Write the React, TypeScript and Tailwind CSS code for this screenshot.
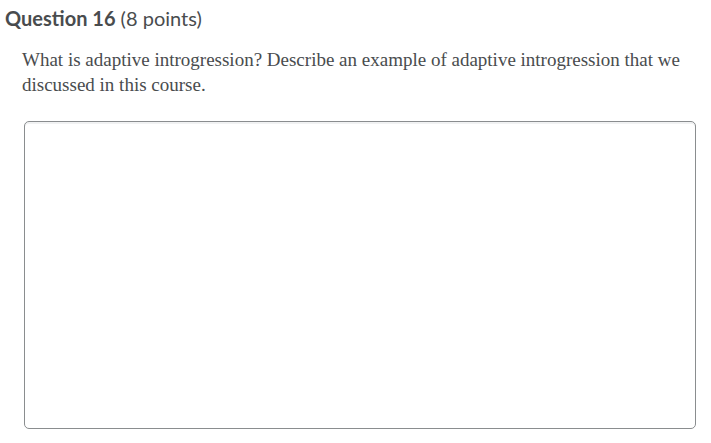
import React from "react"

const App: React.FC = () => {
  return (
    <div className="w-[711px] h-[443px] bg-white overflow-hidden">
      <div className="pl-[5px] pt-[6px]">
        <h2 className="font-['Lato',sans-serif] text-[20px] leading-[24px] text-[#494c4e]">
          <span className="font-bold">Question 16</span>{" "}
          <span className="font-normal">(8 points)</span>
        </h2>
      </div>
      <div className="pl-[22px] pr-[15px] pt-[17px]">
        <p className="font-['Liberation_Serif',serif] text-[19px] leading-[25px] text-[#494c4e]">
          What is adaptive introgression? Describe an example of adaptive
          introgression that we discussed in this course.
        </p>
        <textarea
          className="block mt-[24px] ml-[2px] w-[672px] h-[308px] rounded-[5px] border border-[#8a8d8f] shadow-[inset_0_2px_0_0_#f1f2f3] resize-none outline-none"
        />
      </div>
    </div>
  )
}

export default App
